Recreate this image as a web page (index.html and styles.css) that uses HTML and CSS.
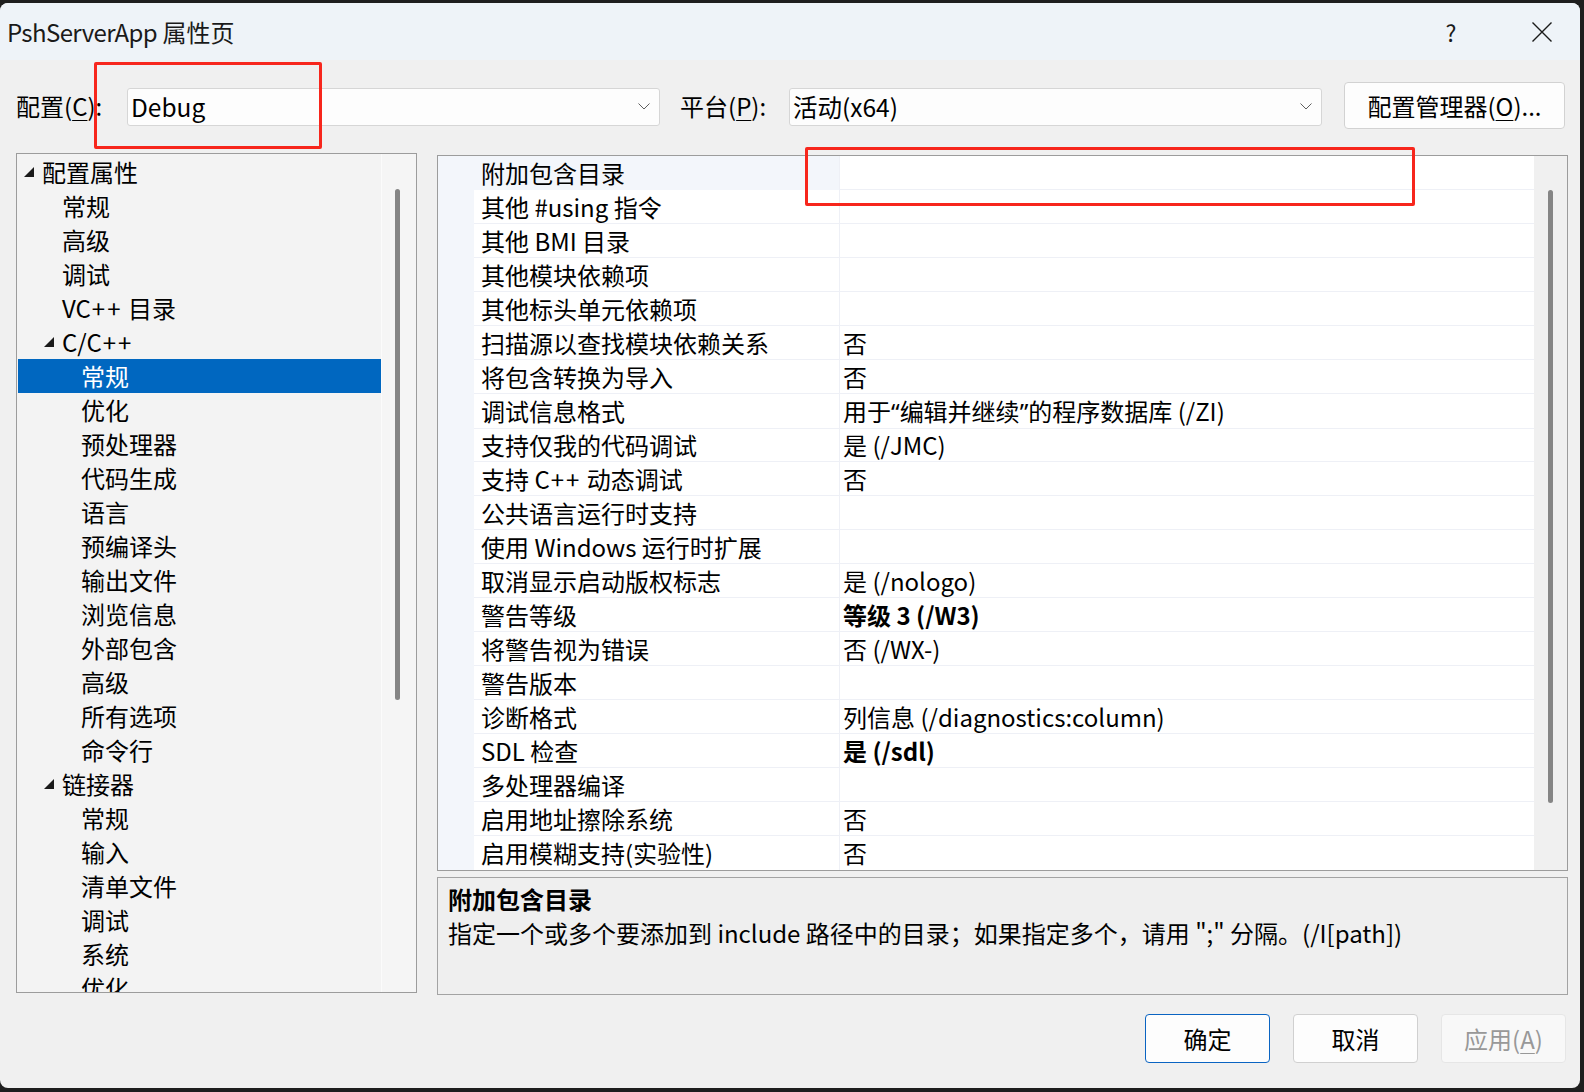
FILE: index.html
```html
<!DOCTYPE html>
<html lang="zh-CN">
<head>
<meta charset="utf-8">
<title>PshServerApp 属性页</title>
<link rel="stylesheet" href="styles.css">
</head>
<body>
<div class="window">
  <header class="titlebar">
    <span class="title"><span class="title-app">PshServerApp</span> 属性页</span>
    <div class="title-controls">
      <span class="tc help">?</span>
      <span class="tc close"><svg width="20" height="20" viewBox="0 0 20 20"><path d="M0.5 0.5L19.5 19.5M19.5 0.5L0.5 19.5" stroke="#1a1a1a" stroke-width="1.4" fill="none"/></svg></span>
    </div>
  </header>

  <div class="toolbar">
    <span class="lbl lbl-config">配置(<u>C</u>):</span>
    <div class="combo combo-config"><span class="combo-text">Debug</span><svg class="chev" width="12" height="7" viewBox="0 0 12 7"><path d="M0.5 0.5L6 6L11.5 0.5" stroke="#5f5f5f" stroke-width="1" fill="none"/></svg></div>
    <span class="lbl lbl-platform">平台(<u>P</u>):</span>
    <div class="combo combo-platform"><span class="combo-text">活动(x64)</span><svg class="chev" width="12" height="7" viewBox="0 0 12 7"><path d="M0.5 0.5L6 6L11.5 0.5" stroke="#5f5f5f" stroke-width="1" fill="none"/></svg></div>
    <button class="btn btn-manager">配置管理器(<u>O</u>)...</button>
  </div>

  <div class="main">
    <div class="tree">
      <ul class="tree-list">
        <li class="ti l0"><span class="tog"><svg width="10" height="10" viewBox="0 0 10 10"><path d="M10 0V10H0Z"/></svg></span>配置属性</li>
        <li class="ti l1"><span class="tog"></span>常规</li>
        <li class="ti l1"><span class="tog"></span>高级</li>
        <li class="ti l1"><span class="tog"></span>调试</li>
        <li class="ti l1"><span class="tog"></span>VC<span class="pp">++</span>&nbsp;目录</li>
        <li class="ti l1"><span class="tog"><svg width="10" height="10" viewBox="0 0 10 10"><path d="M10 0V10H0Z"/></svg></span>C/C<span class="pp">++</span></li>
        <li class="ti l2 sel"><span class="tog"></span>常规</li>
        <li class="ti l2"><span class="tog"></span>优化</li>
        <li class="ti l2"><span class="tog"></span>预处理器</li>
        <li class="ti l2"><span class="tog"></span>代码生成</li>
        <li class="ti l2"><span class="tog"></span>语言</li>
        <li class="ti l2"><span class="tog"></span>预编译头</li>
        <li class="ti l2"><span class="tog"></span>输出文件</li>
        <li class="ti l2"><span class="tog"></span>浏览信息</li>
        <li class="ti l2"><span class="tog"></span>外部包含</li>
        <li class="ti l2"><span class="tog"></span>高级</li>
        <li class="ti l2"><span class="tog"></span>所有选项</li>
        <li class="ti l2"><span class="tog"></span>命令行</li>
        <li class="ti l1"><span class="tog"><svg width="10" height="10" viewBox="0 0 10 10"><path d="M10 0V10H0Z"/></svg></span>链接器</li>
        <li class="ti l2"><span class="tog"></span>常规</li>
        <li class="ti l2"><span class="tog"></span>输入</li>
        <li class="ti l2"><span class="tog"></span>清单文件</li>
        <li class="ti l2"><span class="tog"></span>调试</li>
        <li class="ti l2"><span class="tog"></span>系统</li>
        <li class="ti l2"><span class="tog"></span>优化</li>
      </ul>
      <div class="vscroll tree-scroll"><div class="thumb"></div></div>
    </div>

    <div class="right">
      <div class="grid">
        <div class="grid-rows">
          <div class="row focus"><span class="g"></span><span class="n">附加包含目录</span><span class="v"></span></div>
          <div class="row"><span class="g"></span><span class="n">其他 #using 指令</span><span class="v"></span></div>
          <div class="row"><span class="g"></span><span class="n">其他 BMI 目录</span><span class="v"></span></div>
          <div class="row"><span class="g"></span><span class="n">其他模块依赖项</span><span class="v"></span></div>
          <div class="row"><span class="g"></span><span class="n">其他标头单元依赖项</span><span class="v"></span></div>
          <div class="row"><span class="g"></span><span class="n">扫描源以查找模块依赖关系</span><span class="v">否</span></div>
          <div class="row"><span class="g"></span><span class="n">将包含转换为导入</span><span class="v">否</span></div>
          <div class="row"><span class="g"></span><span class="n">调试信息格式</span><span class="v">用于<span class="q">“</span>编辑并继续<span class="q">”</span>的程序数据库 (/ZI)</span></div>
          <div class="row"><span class="g"></span><span class="n">支持仅我的代码调试</span><span class="v">是 (/JMC)</span></div>
          <div class="row"><span class="g"></span><span class="n">支持 C<span class="pp">++</span> 动态调试</span><span class="v">否</span></div>
          <div class="row"><span class="g"></span><span class="n">公共语言运行时支持</span><span class="v"></span></div>
          <div class="row"><span class="g"></span><span class="n">使用 Windows 运行时扩展</span><span class="v"></span></div>
          <div class="row"><span class="g"></span><span class="n">取消显示启动版权标志</span><span class="v">是 (/nologo)</span></div>
          <div class="row"><span class="g"></span><span class="n">警告等级</span><span class="v bold">等级 3 (/W3)</span></div>
          <div class="row"><span class="g"></span><span class="n">将警告视为错误</span><span class="v">否 (/WX-)</span></div>
          <div class="row"><span class="g"></span><span class="n">警告版本</span><span class="v"></span></div>
          <div class="row"><span class="g"></span><span class="n">诊断格式</span><span class="v">列信息 (/diagnostics:column)</span></div>
          <div class="row"><span class="g"></span><span class="n">SDL 检查</span><span class="v bold">是 (/sdl)</span></div>
          <div class="row"><span class="g"></span><span class="n">多处理器编译</span><span class="v"></span></div>
          <div class="row"><span class="g"></span><span class="n">启用地址擦除系统</span><span class="v">否</span></div>
          <div class="row last"><span class="g"></span><span class="n">启用模糊支持(实验性)</span><span class="v">否</span></div>
        </div>
        <div class="vscroll grid-scroll"><div class="thumb"></div></div>
      </div>
      <div class="desc">
        <div class="desc-title">附加包含目录</div>
        <div class="desc-text">指定一个或多个要添加到 include 路径中的目录；如果指定多个，请用 ";" 分隔。(/I[path])</div>
      </div>
    </div>
  </div>

  <div class="footer">
    <button class="btn btn-ok">确定</button>
    <button class="btn btn-cancel">取消</button>
    <button class="btn btn-apply" disabled>应用(<u>A</u>)</button>
  </div>
</div>

<div class="mark mark-config"></div>
<div class="mark mark-value"></div>
</body>
</html>
```

FILE: styles.css
```css
* {
  box-sizing: border-box;
}

html, body {
  margin: 0;
  padding: 0;
}

body {
  width: 1584px;
  height: 1092px;
  overflow: hidden;
  background: #1e1e1e;
  font-family: "Noto Sans CJK SC", "Noto Sans", sans-serif;
  font-size: 24px;
  color: #000;
  position: relative;
}

u {
  text-decoration: underline;
  text-decoration-thickness: 1px;
  text-underline-offset: 4px;
}

.pp {
  letter-spacing: 2px;
  margin-left: 1px;
}

.q {
  font-family: "Noto Sans", sans-serif;
}

.window {
  margin-top: 3px;
  width: 1580px;
  height: 1085px;
  background: #f0f0f0;
  border-radius: 8px;
  overflow: hidden;
  display: flex;
  flex-direction: column;
}

/* ---------- title bar ---------- */
.titlebar {
  height: 57px;
  flex: none;
  background: #eef3f8;
  display: flex;
  align-items: center;
  justify-content: space-between;
  padding: 0 15px 0 7px;
}

.title {
  font-size: 24px;
  line-height: 30px;
  color: #1a1a1a;
  margin-top: 1px;
  white-space: nowrap;
}

.title-app {
  letter-spacing: -0.6px;
}

.title-controls {
  display: flex;
  align-items: center;
  gap: 45px;
}

.tc {
  width: 46px;
  height: 40px;
  display: flex;
  align-items: center;
  justify-content: center;
  color: #1a1a1a;
}

.help {
  font-size: 23px;
  line-height: 40px;
}

/* ---------- toolbar ---------- */
.toolbar {
  margin-top: 22px;
  height: 47px;
  flex: none;
  display: flex;
  align-items: center;
  padding-left: 16px;
}

.lbl {
  line-height: 34px;
  white-space: nowrap;
  color: #000;
}

.lbl-config {
  width: 111px;
}

.lbl-platform {
  width: 109px;
  margin-left: 20px;
}

.combo {
  width: 533px;
  height: 38px;
  margin-top: 2px;
  background: #fdfdfd;
  border: 1px solid #d6d6d6;
  border-radius: 3px;
  display: flex;
  align-items: center;
  justify-content: space-between;
  padding: 0 9px 0 3px;
}

.combo-text {
  line-height: 34px;
  font-size: 24.5px;
}

.chev {
  display: block;
}

.btn {
  font-family: "Noto Sans CJK SC", "Noto Sans", sans-serif;
  font-size: 24px;
  line-height: 34px;
  color: #000;
  background: #fdfdfd;
  border: 1px solid #d2d2d2;
  border-radius: 4px;
  padding: 0;
  margin: 0;
}

.btn-manager {
  margin-left: 22px;
  width: 221px;
  height: 47px;
}

/* ---------- main ---------- */
.main {
  margin-top: 24px;
  flex: none;
  display: flex;
  align-items: flex-start;
  padding-left: 16px;
  gap: 20px;
}

.tree {
  width: 401px;
  height: 840px;
  border: 1px solid #9c9c9c;
  background: #f3f3f3;
  display: flex;
  overflow: hidden;
}

.tree-list {
  list-style: none;
  margin: 0;
  padding: 1px 0 0 1px;
  width: 364px;
  flex: none;
  overflow: hidden;
}

.ti {
  height: 34px;
  line-height: 34px;
  display: flex;
  align-items: center;
  white-space: nowrap;
  color: #000;
}

.ti.l0 { padding-left: 6px; }
.ti.l1 { padding-left: 26px; }
.ti.l2 { padding-left: 45px; }

.ti.sel {
  background: #0067c0;
  color: #fff;
}

.tog {
  width: 18px;
  flex: none;
  display: flex;
  align-items: center;
}

.tog svg {
  display: block;
  fill: #1a1a1a;
}

.vscroll {
  flex: none;
  display: flex;
  flex-direction: column;
}

.thumb {
  width: 5px;
  background: #858585;
  border-radius: 3px;
  margin-left: 14px;
}

.tree-scroll {
  width: 35px;
  background: #f5f5f5;
  border-left: 1px solid #fbfbfb;
  padding-top: 35px;
}

.tree-scroll .thumb {
  height: 511px;
  margin-left: 13px;
}

/* ---------- right column ---------- */
.right {
  width: 1131px;
  margin-top: 2px;
  display: flex;
  flex-direction: column;
  gap: 6px;
}

.grid {
  height: 716px;
  border: 1px solid #9c9c9c;
  background: #fff;
  display: flex;
  overflow: hidden;
}

.grid-rows {
  flex: 1;
  display: flex;
  flex-direction: column;
}

.row {
  height: 34px;
  display: grid;
  grid-template-columns: 36px 365px 1fr;
  flex: none;
}

.row .g {
  background: #f3f6fb;
}

.row .n,
.row .v {
  line-height: 33px;
  border-bottom: 1px solid #eef0f6;
  white-space: nowrap;
  color: #000;
}

.row .n {
  padding-left: 7px;
}

.row .v {
  border-left: 1px solid #eef0f6;
  padding-left: 3px;
}

.row.focus .n {
  background: #f3f6fb;
  border-bottom-color: #f3f6fb;
}

.row.last .n,
.row.last .v {
  border-bottom: none;
}

.v.bold {
  font-weight: 700;
}

.grid-scroll {
  width: 33px;
  background: #f0f0f0;
  padding-top: 34px;
}

.grid-scroll .thumb {
  height: 613px;
}

.desc {
  height: 118px;
  border: 1px solid #a3a3a3;
  background: #efefef;
  padding: 4px 0 0 10px;
}

.desc-title {
  font-weight: 700;
  line-height: 34px;
}

.desc-text {
  line-height: 34px;
  white-space: nowrap;
}

/* ---------- footer ---------- */
.footer {
  margin-top: 19px;
  flex: none;
  display: flex;
  justify-content: flex-end;
  gap: 23px;
  padding-right: 14px;
}

.footer .btn {
  width: 125px;
  height: 49px;
}

.btn-ok {
  border-color: #0a64c2;
}

.btn-cancel {
  border-color: #d0d0d0;
}

.btn-apply {
  background: #f8f8f8;
  border-color: #e6e6e6;
  color: #989898;
}

/* ---------- red annotation boxes ---------- */
.mark {
  position: absolute;
  border: 3px solid #f7261c;
  border-radius: 2px;
  pointer-events: none;
}

.mark-config {
  left: 94px;
  top: 62px;
  width: 228px;
  height: 87px;
}

.mark-value {
  left: 805px;
  top: 147px;
  width: 610px;
  height: 59px;
}
```
